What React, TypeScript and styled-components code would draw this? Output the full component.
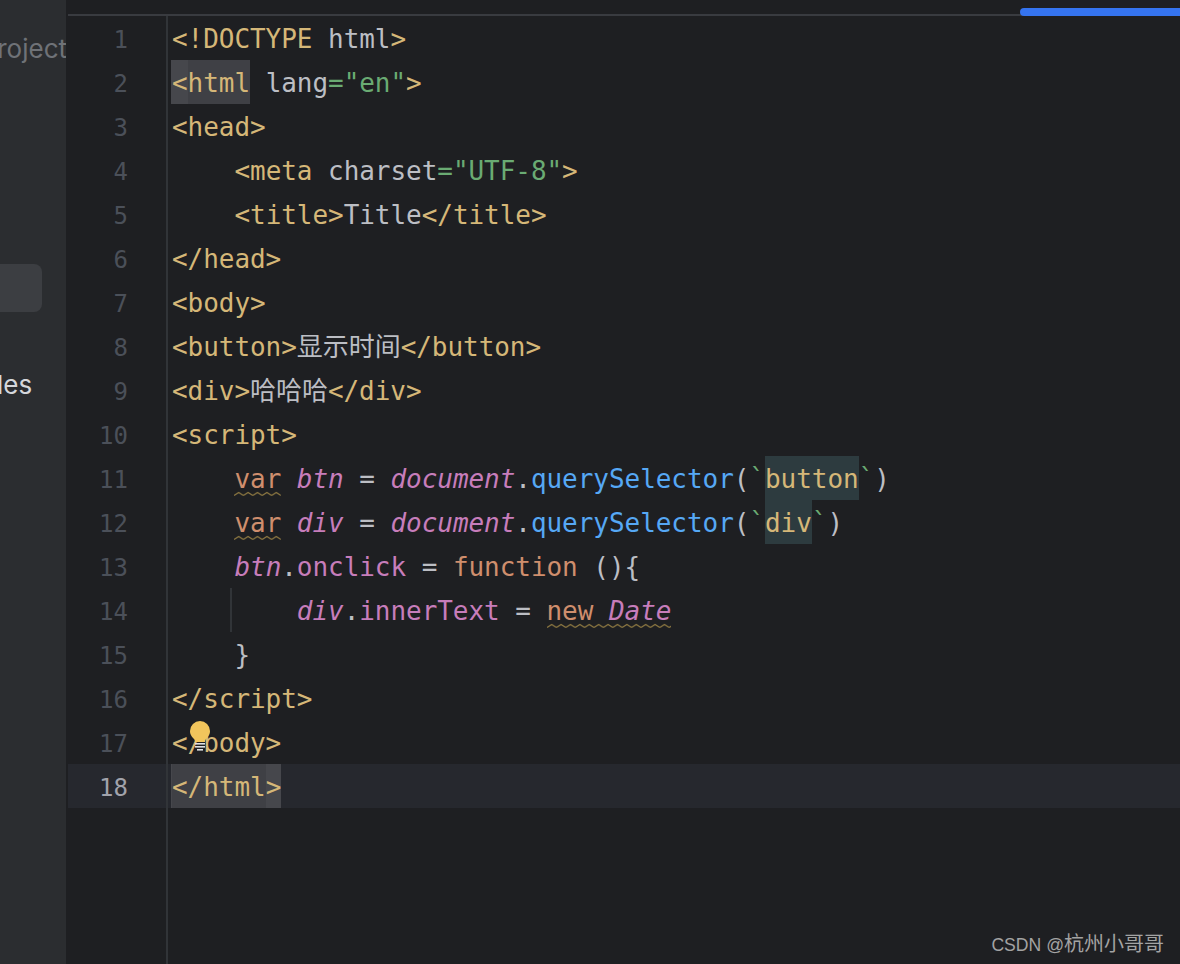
import * as React from "react";
import styled, { createGlobalStyle } from "styled-components";

const GlobalStyle = createGlobalStyle`
  html, body {
    margin: 0;
    padding: 0;
    background: #1e1f22;
  }
`;

const Window = styled.div`
  position: relative;
  display: flex;
  width: 1180px;
  height: 964px;
  overflow: hidden;
  background: #1e1f22;
`;

const Sidebar = styled.aside`
  display: flex;
  flex-direction: column;
  flex: 0 0 66px;
  width: 66px;
  overflow: hidden;
  background: #2b2d30;
  font-family: Inter, "Liberation Sans", sans-serif;
  font-size: 26px;
  line-height: 32px;
`;

const ProjectLabel = styled.div`
  display: flex;
  justify-content: flex-end;
  margin: 33px -1px 0 0;
  white-space: nowrap;
  color: #6f7277;
`;

const FilesLabel = styled.div`
  margin: 57px 0 0 -3px;
  white-space: nowrap;
  color: #d5d7db;
`;

const ActiveItem = styled.div`
  width: 42px;
  height: 48px;
  margin-top: 199px;
  border-radius: 0 8px 8px 0;
  background: #3c3e42;
`;

const Main = styled.main`
  display: flex;
  flex-direction: column;
  flex: 1;
  min-width: 0;
  margin-left: 2px;
`;

const TopBar = styled.div`
  flex: 0 0 16px;
  box-sizing: border-box;
  border-bottom: 2px solid #393b40;
`;

const Editor = styled.div`
  display: flex;
  flex-direction: column;
  flex: 1;
  font-family: "DejaVu Sans Mono", "Noto Sans CJK SC", monospace;
  font-size: 26px;
  letter-spacing: -0.05px;
  line-height: 46px;
  color: #bcbec4;
`;

const Row = styled.div<{ $current?: boolean }>`
  display: flex;
  flex: 0 0 44px;
  height: 44px;
  background: ${(p) => (p.$current ? "#26282e" : "transparent")};
`;

const Filler = styled.div`
  display: flex;
  flex: 1;
`;

const LineNumber = styled.div<{ $current?: boolean }>`
  box-sizing: border-box;
  flex: 0 0 100px;
  padding-right: 38px;
  border-right: 2px solid #313438;
  font-size: 24px;
  line-height: 48px;
  letter-spacing: 0;
  text-align: right;
  color: ${(p) => (p.$current ? "#a1a3ab" : "#4b5059")};
`;

const Code = styled.div`
  position: relative;
  flex: 1;
  padding-left: 4px;
  white-space: pre;
`;

const Tag = styled.span`
  color: #d5b778;
`;

const Str = styled.span`
  color: #6aab73;
`;

const Kw = styled.span`
  color: #cf8e6d;
`;

const Ident = styled.span`
  color: #c77dbb;
  font-style: italic;
`;

const Field = styled.span`
  color: #c77dbb;
`;

const Fn = styled.span`
  color: #56a8f5;
`;

const Wavy = styled.span`
  position: relative;
`;

const WaveLine = styled.svg`
  position: absolute;
  left: 0;
  top: 27px;
  width: 100%;
  height: 6px;
`;

const Match = styled.span<{ $kind: "tag" | "text" }>`
  display: inline-block;
  height: 44px;
  vertical-align: top;
  background: ${(p) => (p.$kind === "tag" ? "#3f4045" : "#2d3b3f")};
  box-shadow: ${(p) => (p.$kind === "tag" ? "-1px 0 0 #46474c" : "none")};
`;

const PairedBracket = styled.span`
  display: inline-block;
  height: 44px;
  vertical-align: top;
  background: #46474c;
`;

const IndentGuide = styled.div`
  position: absolute;
  left: 62px;
  top: 0;
  width: 2px;
  height: 44px;
  background: #313438;
`;

const BulbWrap = styled.div`
  position: absolute;
  left: 21px;
  top: 1px;
  width: 22px;
  height: 32px;
`;

const ProgressBar = styled.div`
  position: absolute;
  top: 8px;
  right: 0;
  width: 160px;
  height: 8px;
  border-radius: 4px 0 0 4px;
  background: #3574f0;
`;

const Watermark = styled.div`
  position: absolute;
  right: 16px;
  bottom: 7px;
  font-family: "Liberation Sans", "Noto Sans CJK SC", sans-serif;
  font-size: 20px;
  line-height: 24px;
  white-space: nowrap;
  color: #a3a3a3;
`;

const WatermarkLatin = styled.span`
  font-size: 17.6px;
`;

const Squiggle: React.FC<{ children: React.ReactNode; id: string }> = ({ children, id }) => (
  <Wavy>
    {children}
    <WaveLine aria-hidden="true">
      <defs>
        <pattern id={id} patternUnits="userSpaceOnUse" width="9.400" height="6">
          <path d="M0 4.500 L4.700 1.500 L9.400 4.500" fill="none" stroke="#8a7540" strokeWidth="1.300" />
        </pattern>
      </defs>
      <rect width="100%" height="6" fill={`url(#${id})`} />
    </WaveLine>
  </Wavy>
);

const Bulb: React.FC = () => (
  <BulbWrap>
    <svg width="22" height="32" viewBox="0 0 22 32">
      <path
        d="M11 0a10 10 0 0 1 10 10c0 4-2.300 6-4 8-.8 1-1 2-1 3H6c0-1-.2-2-1-3-1.700-2-4-4-4-8A10 10 0 0 1 11 0z"
        fill="#f2c55c"
      />
      <rect x="6" y="22" width="10" height="1.600" fill="#dfe1e5" />
      <rect x="6" y="25" width="10" height="1.600" fill="#dfe1e5" />
      <rect x="8" y="28" width="6" height="1.600" fill="#dfe1e5" />
    </svg>
  </BulbWrap>
);

const lines: React.ReactNode[] = [
  <>
    <Tag>{"<!DOCTYPE"}</Tag> html<Tag>{">"}</Tag>
  </>,
  <>
    <Match $kind="tag">
      <PairedBracket>
        <Tag>{"<"}</Tag>
      </PairedBracket>
      <Tag>html</Tag>
    </Match>{" "}
    lang<Str>="en"</Str>
    <Tag>{">"}</Tag>
  </>,
  <Tag>{"<head>"}</Tag>,
  <>
    {"    "}
    <Tag>{"<meta"}</Tag> charset<Str>="UTF-8"</Str>
    <Tag>{">"}</Tag>
  </>,
  <>
    {"    "}
    <Tag>{"<title>"}</Tag>Title<Tag>{"</title>"}</Tag>
  </>,
  <Tag>{"</head>"}</Tag>,
  <Tag>{"<body>"}</Tag>,
  <>
    <Tag>{"<button>"}</Tag>显示时间<Tag>{"</button>"}</Tag>
  </>,
  <>
    <Tag>{"<div>"}</Tag>哈哈哈<Tag>{"</div>"}</Tag>
  </>,
  <Tag>{"<script>"}</Tag>,
  <>
    {"    "}
    <Squiggle id="wave-btn">
      <Kw>var</Kw>
    </Squiggle>{" "}
    <Ident>btn</Ident> = <Ident>document</Ident>.<Fn>querySelector</Fn>(
    <Str>`</Str>
    <Match $kind="text">
      <Tag>button</Tag>
    </Match>
    <Str>`</Str>)
  </>,
  <>
    {"    "}
    <Squiggle id="wave-div">
      <Kw>var</Kw>
    </Squiggle>{" "}
    <Ident>div</Ident> = <Ident>document</Ident>.<Fn>querySelector</Fn>(
    <Str>`</Str>
    <Match $kind="text">
      <Tag>div</Tag>
    </Match>
    <Str>`</Str>)
  </>,
  <>
    {"    "}
    <Ident>btn</Ident>.<Field>onclick</Field> = <Kw>function</Kw> (){"{"}
  </>,
  <>
    <IndentGuide />
    {"        "}
    <Ident>div</Ident>.<Field>innerText</Field> ={" "}
    <Squiggle id="wave-new">
      <Kw>new</Kw> <Ident>Date</Ident>
    </Squiggle>
  </>,
  <>
    {"    "}
    {"}"}
  </>,
  <Tag>{"</script>"}</Tag>,
  <>
    <Tag>{"</body>"}</Tag>
    <Bulb />
  </>,
  <Match $kind="tag">
    <Tag>{"</html"}</Tag>
    <PairedBracket>
      <Tag>{">"}</Tag>
    </PairedBracket>
  </Match>,
];

const App: React.FC = () => (
  <Window>
    <GlobalStyle />
    <Sidebar>
      <ProjectLabel>Project</ProjectLabel>
      <ActiveItem />
      <FilesLabel>les</FilesLabel>
    </Sidebar>
    <Main>
      <TopBar />
      <Editor>
        {lines.map((line, i) => {
          const current = i === lines.length - 1;
          return (
            <Row key={i} $current={current}>
              <LineNumber $current={current}>{i + 1}</LineNumber>
              <Code>{line}</Code>
            </Row>
          );
        })}
        <Filler>
          <LineNumber />
        </Filler>
      </Editor>
    </Main>
    <ProgressBar />
    <Watermark>
      <WatermarkLatin>CSDN @</WatermarkLatin>杭州小哥哥
    </Watermark>
  </Window>
);

export default App;
